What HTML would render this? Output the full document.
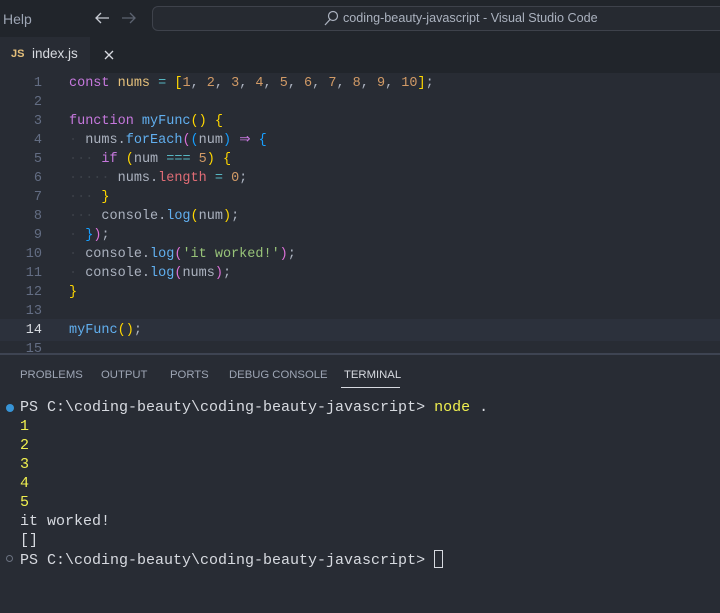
<!DOCTYPE html>
<html><head><meta charset="utf-8"><style>
*{margin:0;padding:0;box-sizing:border-box}
body{width:720px;height:613px;background:#282c34;overflow:hidden;position:relative;font-family:"Liberation Sans",sans-serif}
.title{position:absolute;left:0;top:0;width:720px;height:37px;background:#21252b}
.tabbar{position:absolute;left:0;top:37px;width:720px;height:36px;background:#21252b}
.tab{position:absolute;left:0;top:0;width:90px;height:36px;background:#282c34}
.code{position:absolute;left:0;top:73px;width:720px;font-family:"Liberation Mono",monospace;font-size:13.5px;color:#abb2bf}
.ln{position:absolute;left:0;width:720px;height:19px;line-height:19px;white-space:pre}
.num{position:absolute;left:0;width:42px;text-align:right;color:#636d83}
.tx{position:absolute;left:69px}
.k{color:#c678dd}.f{color:#61afef}.v{color:#e5c07b}.n{color:#d19a66}.o{color:#56b6c2}.r{color:#e06c75}.s{color:#98c379}
.y{color:#ffd700}.p{color:#da70d6}.b{color:#179fff}.d{color:#3b4048}
.sep{position:absolute;left:0;top:353px;width:720px;height:2px;background:#3e4452}
.ptabs{position:absolute;top:367px;font-size:11.3px;color:#9da5b4;height:16px;line-height:16px}
.term{position:absolute;left:20px;top:398px;font-family:"Liberation Mono",monospace;font-size:15px;color:#d7dae0}
.term div{height:19px;line-height:19px;white-space:pre}
</style></head><body>
<div class="title">
<div style="position:absolute;left:3px;top:11px;font-size:14px;color:#9da5b4">Help</div>
<svg style="position:absolute;left:94px;top:11px" width="16" height="14"><path d="M15 7H2M7 2L2 7l5 5" stroke="#c8ccd4" stroke-width="1.3" fill="none"/></svg>
<svg style="position:absolute;left:121px;top:11px" width="16" height="14"><path d="M1 7h13M9 2l5 5-5 5" stroke="#5c6370" stroke-width="1.3" fill="none"/></svg>
<div style="position:absolute;left:152px;top:6px;width:580px;height:25px;border:1px solid #3e424b;border-radius:6px;background:#262a31"></div>
<svg style="position:absolute;left:323px;top:10px" width="16" height="16"><circle cx="10" cy="6" r="4.5" stroke="#abb2bf" stroke-width="1.2" fill="none"/><path d="M7 9.5L2 15" stroke="#abb2bf" stroke-width="1.3"/></svg>
<div style="position:absolute;left:343px;top:11px;font-size:12.6px;color:#abb2bf">coding-beauty-javascript - Visual Studio Code</div>
</div>
<div class="tabbar"><div class="tab">
<div style="position:absolute;left:11px;top:11px;font-size:11px;font-weight:bold;color:#e5c07b">JS</div>
<div style="position:absolute;left:32px;top:9px;font-size:13.5px;color:#d7dae0">index.js</div>
<svg style="position:absolute;left:104px;top:13px" width="10" height="10"><path d="M1 1l8 8M9 1l-8 8" stroke="#d7dae0" stroke-width="1.3"/></svg>
</div></div>
<div class="code">
<div class="ln" style="top:1px"><span class="num">1</span><span class="tx"><span class="k">const</span> <span class="v">nums</span> <span class="o">=</span> <span class="y">[</span><span class="n">1</span>, <span class="n">2</span>, <span class="n">3</span>, <span class="n">4</span>, <span class="n">5</span>, <span class="n">6</span>, <span class="n">7</span>, <span class="n">8</span>, <span class="n">9</span>, <span class="n">10</span><span class="y">]</span>;</span></div>
<div class="ln" style="top:20px"><span class="num">2</span></div>
<div class="ln" style="top:39px"><span class="num">3</span><span class="tx"><span class="k">function</span> <span class="f">myFunc</span><span class="y">()</span> <span class="y">{</span></span></div>
<div class="ln" style="top:58px"><span class="num">4</span><span class="tx"><span class="d">·</span> nums.<span class="f">forEach</span><span class="p">(</span><span class="b">(</span>num<span class="b">)</span> <span class="k">⇒</span> <span class="b">{</span></span></div>
<div class="ln" style="top:77px"><span class="num">5</span><span class="tx"><span class="d">···</span> <span class="k">if</span> <span class="y">(</span>num <span class="o">===</span> <span class="n">5</span><span class="y">)</span> <span class="y">{</span></span></div>
<div class="ln" style="top:96px"><span class="num">6</span><span class="tx"><span class="d">·····</span> nums.<span class="r">length</span> <span class="o">=</span> <span class="n">0</span>;</span></div>
<div class="ln" style="top:115px"><span class="num">7</span><span class="tx"><span class="d">···</span> <span class="y">}</span></span></div>
<div class="ln" style="top:134px"><span class="num">8</span><span class="tx"><span class="d">···</span> console.<span class="f">log</span><span class="y">(</span>num<span class="y">)</span>;</span></div>
<div class="ln" style="top:153px"><span class="num">9</span><span class="tx"><span class="d">·</span> <span class="b">}</span><span class="p">)</span>;</span></div>
<div class="ln" style="top:172px"><span class="num">10</span><span class="tx"><span class="d">·</span> console.<span class="f">log</span><span class="p">(</span><span class="s">'it worked!'</span><span class="p">)</span>;</span></div>
<div class="ln" style="top:191px"><span class="num">11</span><span class="tx"><span class="d">·</span> console.<span class="f">log</span><span class="p">(</span>nums<span class="p">)</span>;</span></div>
<div class="ln" style="top:210px"><span class="num">12</span><span class="tx"><span class="y">}</span></span></div>
<div class="ln" style="top:229px"><span class="num">13</span></div>
<div class="ln" style="top:246px;height:22px;background:#2c313c"></div>
<div class="ln" style="top:248px"><span class="num" style="color:#d7dae0">14</span><span class="tx"><span class="f">myFunc</span><span class="y">()</span>;</span></div>
<div class="ln" style="top:267px"><span class="num">15</span></div>
</div>
<div class="sep"></div>
<div class="ptabs" style="left:20px">PROBLEMS</div>
<div class="ptabs" style="left:101px">OUTPUT</div>
<div class="ptabs" style="left:170px">PORTS</div>
<div class="ptabs" style="left:229px">DEBUG CONSOLE</div>
<div class="ptabs" style="left:344px;color:#d7dae0">TERMINAL</div>
<div style="position:absolute;left:341px;top:387px;width:59px;height:1px;background:#d7dae0"></div>
<div style="position:absolute;left:6px;top:404px;width:8px;height:8px;border-radius:50%;background:#3794d6"></div>
<div style="position:absolute;left:6px;top:555px;width:7px;height:7px;border-radius:50%;border:1px solid #6b7280"></div>
<div class="term"><div>PS C:\coding-beauty\coding-beauty-javascript&gt; <span style="color:#f0f04f">node</span> .</div><div style="color:#f0f04f">1</div><div style="color:#f0f04f">2</div><div style="color:#f0f04f">3</div><div style="color:#f0f04f">4</div><div style="color:#f0f04f">5</div><div>it worked!</div><div>[]</div><div>PS C:\coding-beauty\coding-beauty-javascript&gt; <span style="display:inline-block;width:9px;height:18px;border:1px solid #d7dae0;vertical-align:-4px"></span></div></div>
</body></html>
